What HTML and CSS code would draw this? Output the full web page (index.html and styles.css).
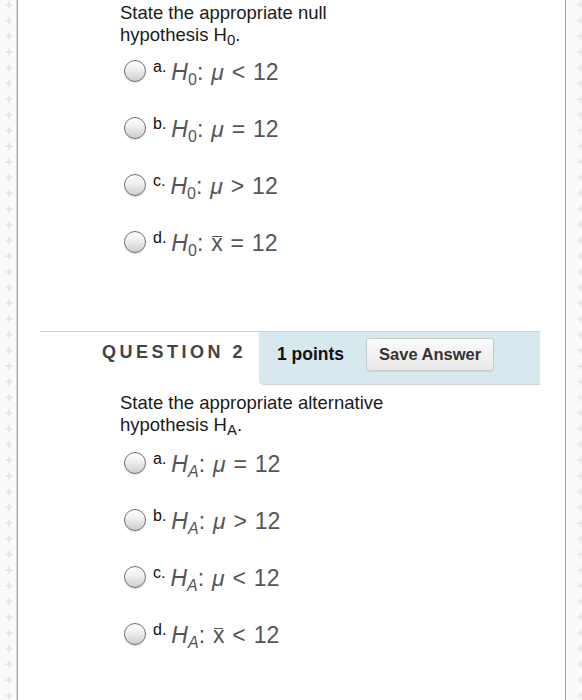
FILE: index.html
```html
<!DOCTYPE html>
<html>
<head>
<meta charset="utf-8">
<link rel="stylesheet" href="styles.css">
</head>
<body>
<div class="page">
  <div class="strip">
    <svg class="pattern" width="17" height="700" aria-hidden="true">
      <defs>
        <pattern id="plusL" x="0" y="-3" width="17" height="15.7" patternUnits="userSpaceOnUse">
          <path d="M5.5 8h7M9 4.5v7" stroke="#e3e3e3" stroke-width="1.6" fill="none"/>
        </pattern>
      </defs>
      <rect width="17" height="700" fill="url(#plusL)"/>
    </svg>
  </div>
  <main class="panel">
    <section class="question q1">
      <p class="prompt">State the appropriate null<br>hypothesis H<sub>0</sub>.</p>
      <ul class="options">
        <li class="option"><span class="radio"></span><span class="letter">a.</span><span class="math"><i>H</i><sub>0</sub>: <i>μ</i> &lt; 12</span></li>
        <li class="option"><span class="radio"></span><span class="letter">b.</span><span class="math"><i>H</i><sub>0</sub>: <i>μ</i> = 12</span></li>
        <li class="option"><span class="radio"></span><span class="letter">c.</span><span class="math"><i>H</i><sub>0</sub>: <i>μ</i> &gt; 12</span></li>
        <li class="option"><span class="radio"></span><span class="letter">d.</span><span class="math"><i>H</i><sub>0</sub>: <span class="bar">x</span> = 12</span></li>
      </ul>
    </section>

    <header class="qhead">
      <div class="qtitle">QUESTION 2</div>
      <div class="qinfo">
        <span class="points">1 points</span>
        <button class="save">Save Answer</button>
      </div>
    </header>

    <section class="question q2">
      <p class="prompt">State the appropriate alternative<br>hypothesis H<sub>A</sub>.</p>
      <ul class="options">
        <li class="option"><span class="radio"></span><span class="letter">a.</span><span class="math"><i>H</i><sub><i>A</i></sub>: <i>μ</i> = 12</span></li>
        <li class="option"><span class="radio"></span><span class="letter">b.</span><span class="math"><i>H</i><sub><i>A</i></sub>: <i>μ</i> &gt; 12</span></li>
        <li class="option"><span class="radio"></span><span class="letter">c.</span><span class="math"><i>H</i><sub><i>A</i></sub>: <i>μ</i> &lt; 12</span></li>
        <li class="option"><span class="radio"></span><span class="letter">d.</span><span class="math"><i>H</i><sub><i>A</i></sub>: <span class="bar">x</span> &lt; 12</span></li>
      </ul>
    </section>
  </main>
  <div class="strip">
    <svg class="pattern" width="16" height="700" aria-hidden="true">
      <defs>
        <pattern id="plusR" x="0" y="-3" width="16" height="15.7" patternUnits="userSpaceOnUse">
          <path d="M11 8h7M14.5 4.5v7" stroke="#e8e8e8" stroke-width="1.6" fill="none"/>
        </pattern>
      </defs>
      <rect width="16" height="700" fill="url(#plusR)"/>
    </svg>
  </div>
</div>
</body>
</html>
```

FILE: styles.css
```css
html, body {
  margin: 0;
  padding: 0;
}
body {
  background: #f9f9f9;
  font-family: "Liberation Sans", Arial, sans-serif;
  color: #222;
  overflow: hidden;
}
.page {
  display: grid;
  grid-template-columns: 17px 549px 16px;
  height: 700px;
}
.strip {
  background: #fafafa;
  overflow: hidden;
}
.pattern {
  display: block;
}
.panel {
  background: #fff;
  border-left: 1px solid #a4a4a4;
  border-right: 1px solid #a4a4a4;
  box-shadow: -1px 0 0 #dcdcdc, 1px 0 0 #dcdcdc;
}
.question {
  padding-left: 102px;
}
.q1 {
  padding-top: 2px;
}
.q2 {
  margin-top: 8px;
}
.prompt {
  margin: 0;
  font-size: 18.5px;
  line-height: 22px;
  color: #1a1a1a;
}
.prompt sub {
  font-size: 15px;
  vertical-align: -4px;
  line-height: 0;
}
.options {
  list-style: none;
  margin: 0;
  padding: 0;
}
.q1 .options {
  margin-top: -4px;
}
.q2 .options {
  margin-top: -2px;
}
.option {
  height: 57px;
  display: flex;
  align-items: center;
}
.radio {
  width: 20px;
  height: 20px;
  margin-left: 4px;
  border-radius: 50%;
  border: 1px solid #6f6f6f;
  background: linear-gradient(#ffffff 0%, #eeeeee 45%, #cdcdcd 100%);
  box-shadow: inset 0 1px 1px rgba(255,255,255,0.9), 0 1px 1px rgba(0,0,0,0.12);
  flex: none;
}
.letter {
  font-size: 16px;
  color: #111;
  margin-left: 7px;
  margin-bottom: 8px;
}
.math {
  margin-left: 5px;
  margin-top: 4px;
  font-size: 23px;
  word-spacing: 1.5px;
  color: #555;
  white-space: pre;
}
.math i {
  font-style: italic;
}
.math sub {
  font-size: 16px;
  vertical-align: -5px;
  line-height: 0;
}
.bar {
  position: relative;
}
.bar::before {
  content: "";
  position: absolute;
  left: 1px;
  right: 1px;
  top: 6px;
  border-top: 1.5px solid #555;
}
.qhead {
  margin: 61px 25px 0 22px;
  border-top: 1px solid #cfcfcf;
  display: flex;
}
.qtitle {
  width: 219px;
  box-sizing: border-box;
  padding-right: 13px;
  text-align: right;
  font-weight: bold;
  font-size: 18px;
  letter-spacing: 3.5px;
  color: #444;
  line-height: 40px;
}
.qinfo {
  flex: 1;
  height: 52px;
  background: #d8e8ef;
  border-bottom-left-radius: 5px;
  box-shadow: 0 1px 1px rgba(0,0,0,0.18);
  display: flex;
  align-items: center;
  padding-left: 18px;
  box-sizing: border-box;
}
.points {
  font-weight: bold;
  font-size: 17.5px;
  color: #111;
  margin-top: -7px;
}
.save {
  margin-left: 22px;
  margin-top: -7px;
  width: 128px;
  height: 33px;
  font-family: "Liberation Sans", Arial, sans-serif;
  font-weight: bold;
  font-size: 16.5px;
  color: #333;
  border: 1px solid #cacaca;
  border-radius: 3px;
  background: linear-gradient(#fafafa, #e9e9e9);
  box-shadow: 0 1px 1px rgba(0,0,0,0.08);
  padding: 0;
}
```
